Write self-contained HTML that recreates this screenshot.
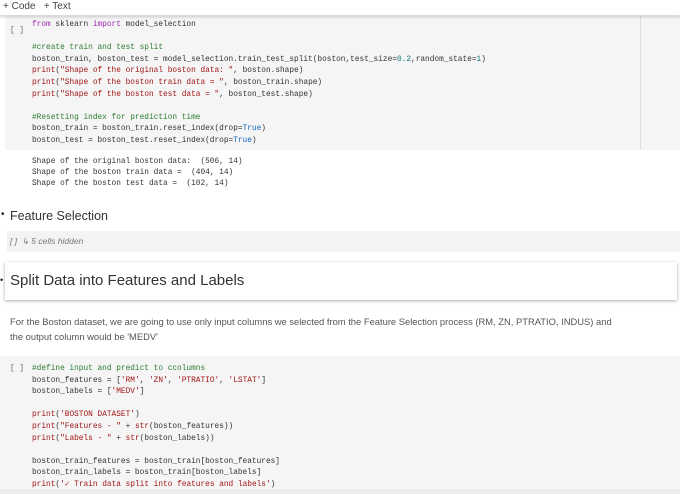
<!DOCTYPE html>
<html><head><meta charset="utf-8"><style>
*{margin:0;padding:0;box-sizing:border-box}
body{width:680px;height:494px;background:#fff;position:relative;overflow:hidden;font-family:"Liberation Sans",sans-serif;color:#212121}
.a{position:absolute;white-space:pre}
.code{font-family:"Liberation Mono",monospace;font-size:7.8px;color:#333;line-height:11.6px}
.k{color:#9c27b0}.c{color:#2e7d32}.s{color:#a31515}.n{color:#0b7a75}.b{color:#1565c0}
.gray{color:#666}
</style></head><body>
<div class="a" style="left:0;top:0;width:680px;height:15px;background:#fff;box-shadow:0 2px 3px rgba(0,0,0,.18);z-index:2"></div>
<div class="a" style="left:3px;top:1px;font-size:10px;color:#444;z-index:3">+ Code   + Text</div>
<div class="a" style="left:5px;top:16px;width:675px;height:134px;background:#f5f5f5"></div>
<div class="a" style="left:640px;top:16px;width:1px;height:134px;background:#dcdcdc"></div>
<div class="a code gray" style="left:10px;top:26px">[ ]</div>
<div class="a code" style="left:32px;top:20px"><span class="k">from</span> sklearn <span class="k">import</span> model_selection

<span class="c">#create train and test split</span>
boston_train, boston_test = model_selection.train_test_split(boston,test_size=<span class="n">0.2</span>,random_state=<span class="n">1</span>)
<span class="s">print</span>(<span class="s">"Shape of the original boston data: "</span>, boston.shape)
<span class="s">print</span>(<span class="s">"Shape of the boston train data = "</span>, boston_train.shape)
<span class="s">print</span>(<span class="s">"Shape of the boston test data = "</span>, boston_test.shape)

<span class="c">#Resetting index for prediction time</span>
boston_train = boston_train.reset_index(drop=<span class="b">True</span>)
boston_test = boston_test.reset_index(drop=<span class="b">True</span>)</div>
<div class="a code" style="left:32px;top:157px;line-height:11px">Shape of the original boston data:  (506, 14)
Shape of the boston train data =  (404, 14)
Shape of the boston test data =  (102, 14)</div>
<div class="a" style="left:1px;top:209px;font-size:10px">•</div>
<div class="a" style="left:10px;top:209px;font-size:12.5px;color:#333">Feature Selection</div>
<div class="a" style="left:7px;top:231px;width:673px;height:21px;background:#f3f3f3"></div>
<div class="a" style="left:10px;top:236px;font-size:8.5px;color:#777;font-style:italic">[ ]  ↳ 5 cells hidden</div>
<div class="a" style="left:5px;top:262px;width:672px;height:38px;background:#fff;box-shadow:0 1px 3px rgba(0,0,0,.35)"></div>
<div class="a" style="left:0px;top:275px;font-size:9px">•</div>
<div class="a" style="left:10px;top:272px;font-size:15px;color:#333">Split Data into Features and Labels</div>
<div class="a" style="left:10px;top:314px;font-size:9.4px;color:#555;line-height:15px">For the Boston dataset, we are going to use only input columns we selected from the Feature Selection process (RM, ZN, PTRATIO, INDUS) and
the output column would be 'MEDV'</div>
<div class="a" style="left:0;top:356px;width:680px;height:133px;background:#f5f5f5"></div>
<div class="a" style="left:0;top:489px;width:680px;height:5px;background:#ececec"></div>
<div class="a code gray" style="left:10px;top:364px">[ ]</div>
<div class="a code" style="left:32px;top:364px"><span class="c">#define input and predict to ccolumns</span>
boston_features = [<span class="s">'RM'</span>, <span class="s">'ZN'</span>, <span class="s">'PTRATIO'</span>, <span class="s">'LSTAT'</span>]
boston_labels = [<span class="s">'MEDV'</span>]

<span class="s">print</span>(<span class="s">'BOSTON DATASET'</span>)
<span class="s">print</span>(<span class="s">"Features - "</span> + <span class="s">str</span>(boston_features))
<span class="s">print</span>(<span class="s">"Labels - "</span> + <span class="s">str</span>(boston_labels))

boston_train_features = boston_train[boston_features]
boston_train_labels = boston_train[boston_labels]
<span class="s">print</span>(<span class="s">'✓ Train data split into features and labels'</span>)</div>
</body></html>
